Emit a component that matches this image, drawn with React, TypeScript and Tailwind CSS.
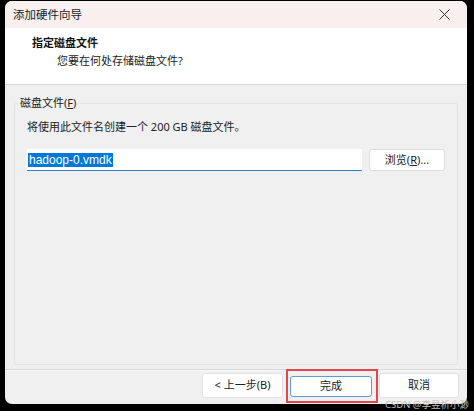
import React from "react";

export default function App() {
  const font = { fontFamily: '"Noto Sans", "Noto Sans CJK SC", sans-serif' };
  return (
    <div className="w-[474px] h-[411px] bg-black relative overflow-hidden" style={font}>
      <div className="absolute left-[5px] top-[1px] w-[462px] h-[403px] rounded-[7px] overflow-hidden flex flex-col bg-[#f0f0f0]">
        {/* title bar */}
        <div className="h-[27px] bg-[#f8f0ee] flex items-center justify-between pl-[8px] pr-[17px] shrink-0">
          <span className="text-[11.5px] text-[#1a1a1a] leading-none">添加硬件向导</span>
          <svg width="11" height="11" viewBox="0 0 11 11">
            <path d="M0.5 0.5 L10.5 10.5 M10.5 0.5 L0.5 10.5" stroke="#333" strokeWidth="1" fill="none" />
          </svg>
        </div>
        {/* header */}
        <div className="h-[57px] bg-white border-b border-[#d8d8d8] shrink-0 pl-[27px] pt-[7px]">
          <div className="text-[11px] font-bold text-[#111] leading-[16px]">指定磁盘文件</div>
          <div className="text-[11px] text-[#222] leading-[16px] mt-[2px] pl-[25px]">您要在何处存储磁盘文件?</div>
        </div>
        {/* body */}
        <div className="flex-1 relative px-[9px] pt-[18px]">
          <div className="border border-[#e4e4e4] rounded-[2px] h-[262px] relative px-[12px] pt-[15px]">
            <div className="absolute -top-[9px] left-[3px] bg-[#f0f0f0] px-[2px] text-[11px] text-[#222] leading-[16px]">
              磁盘文件(<span className="underline">F</span>)
            </div>
            <div className="text-[11px] text-[#222] leading-[16px]">将使用此文件名创建一个 200 GB 磁盘文件。</div>
            <div className="flex items-center mt-[14px] gap-[7px]">
              <div className="w-[335px] h-[22px] bg-white border-b-[1.5px] border-[#2f7fd0] flex items-center pl-[1px]">
                <span className="bg-[#0078d7] text-white text-[12px] leading-[14px] px-[1px]" style={{ fontFamily: '"Liberation Sans", Arial, sans-serif' }}>hadoop-0.vmdk</span>
              </div>
              <div className="w-[76px] h-[22px] bg-white border border-[#dedede] rounded-[3px] flex items-center justify-center text-[11px] text-[#222]">
                浏览(<span className="underline">R</span>)...
              </div>
            </div>
          </div>
        </div>
        {/* separator */}
        <div className="h-[1px] bg-[#d6d6d6] shrink-0" />
        <div className="h-[1px] bg-[#fafafa] shrink-0" />
        {/* buttons */}
        <div className="h-[33px] shrink-0 flex items-start pt-[2px] pl-[197px] gap-[7px] relative">
          <div className="w-[81px] h-[25px] bg-white border border-[#e2e2e2] rounded-[3px] flex items-center justify-center text-[11px] text-[#222]">
            &lt; 上一步(<span>B</span>)
          </div>
          <div className="relative w-[82px] h-[21px] mt-[3px] bg-white border border-[#5a9bd8] rounded-[3px] flex items-center justify-center text-[11px] text-[#222]">
            完成
            <div className="absolute -left-[5px] -top-[8px] w-[92px] h-[34px] border-2 border-[#e0484e] pointer-events-none" />
          </div>
          <div className="w-[80px] h-[25px] bg-white border border-[#e2e2e2] rounded-[3px] flex items-center justify-center text-[11px] text-[#222]">
            取消
          </div>
        </div>
      </div>
      <div className="absolute left-[385px] top-[399px] text-[9.5px] text-[#bdbdbd] leading-[11px] whitespace-nowrap">CSDN @李昱析小渺</div>
    </div>
  );
}
